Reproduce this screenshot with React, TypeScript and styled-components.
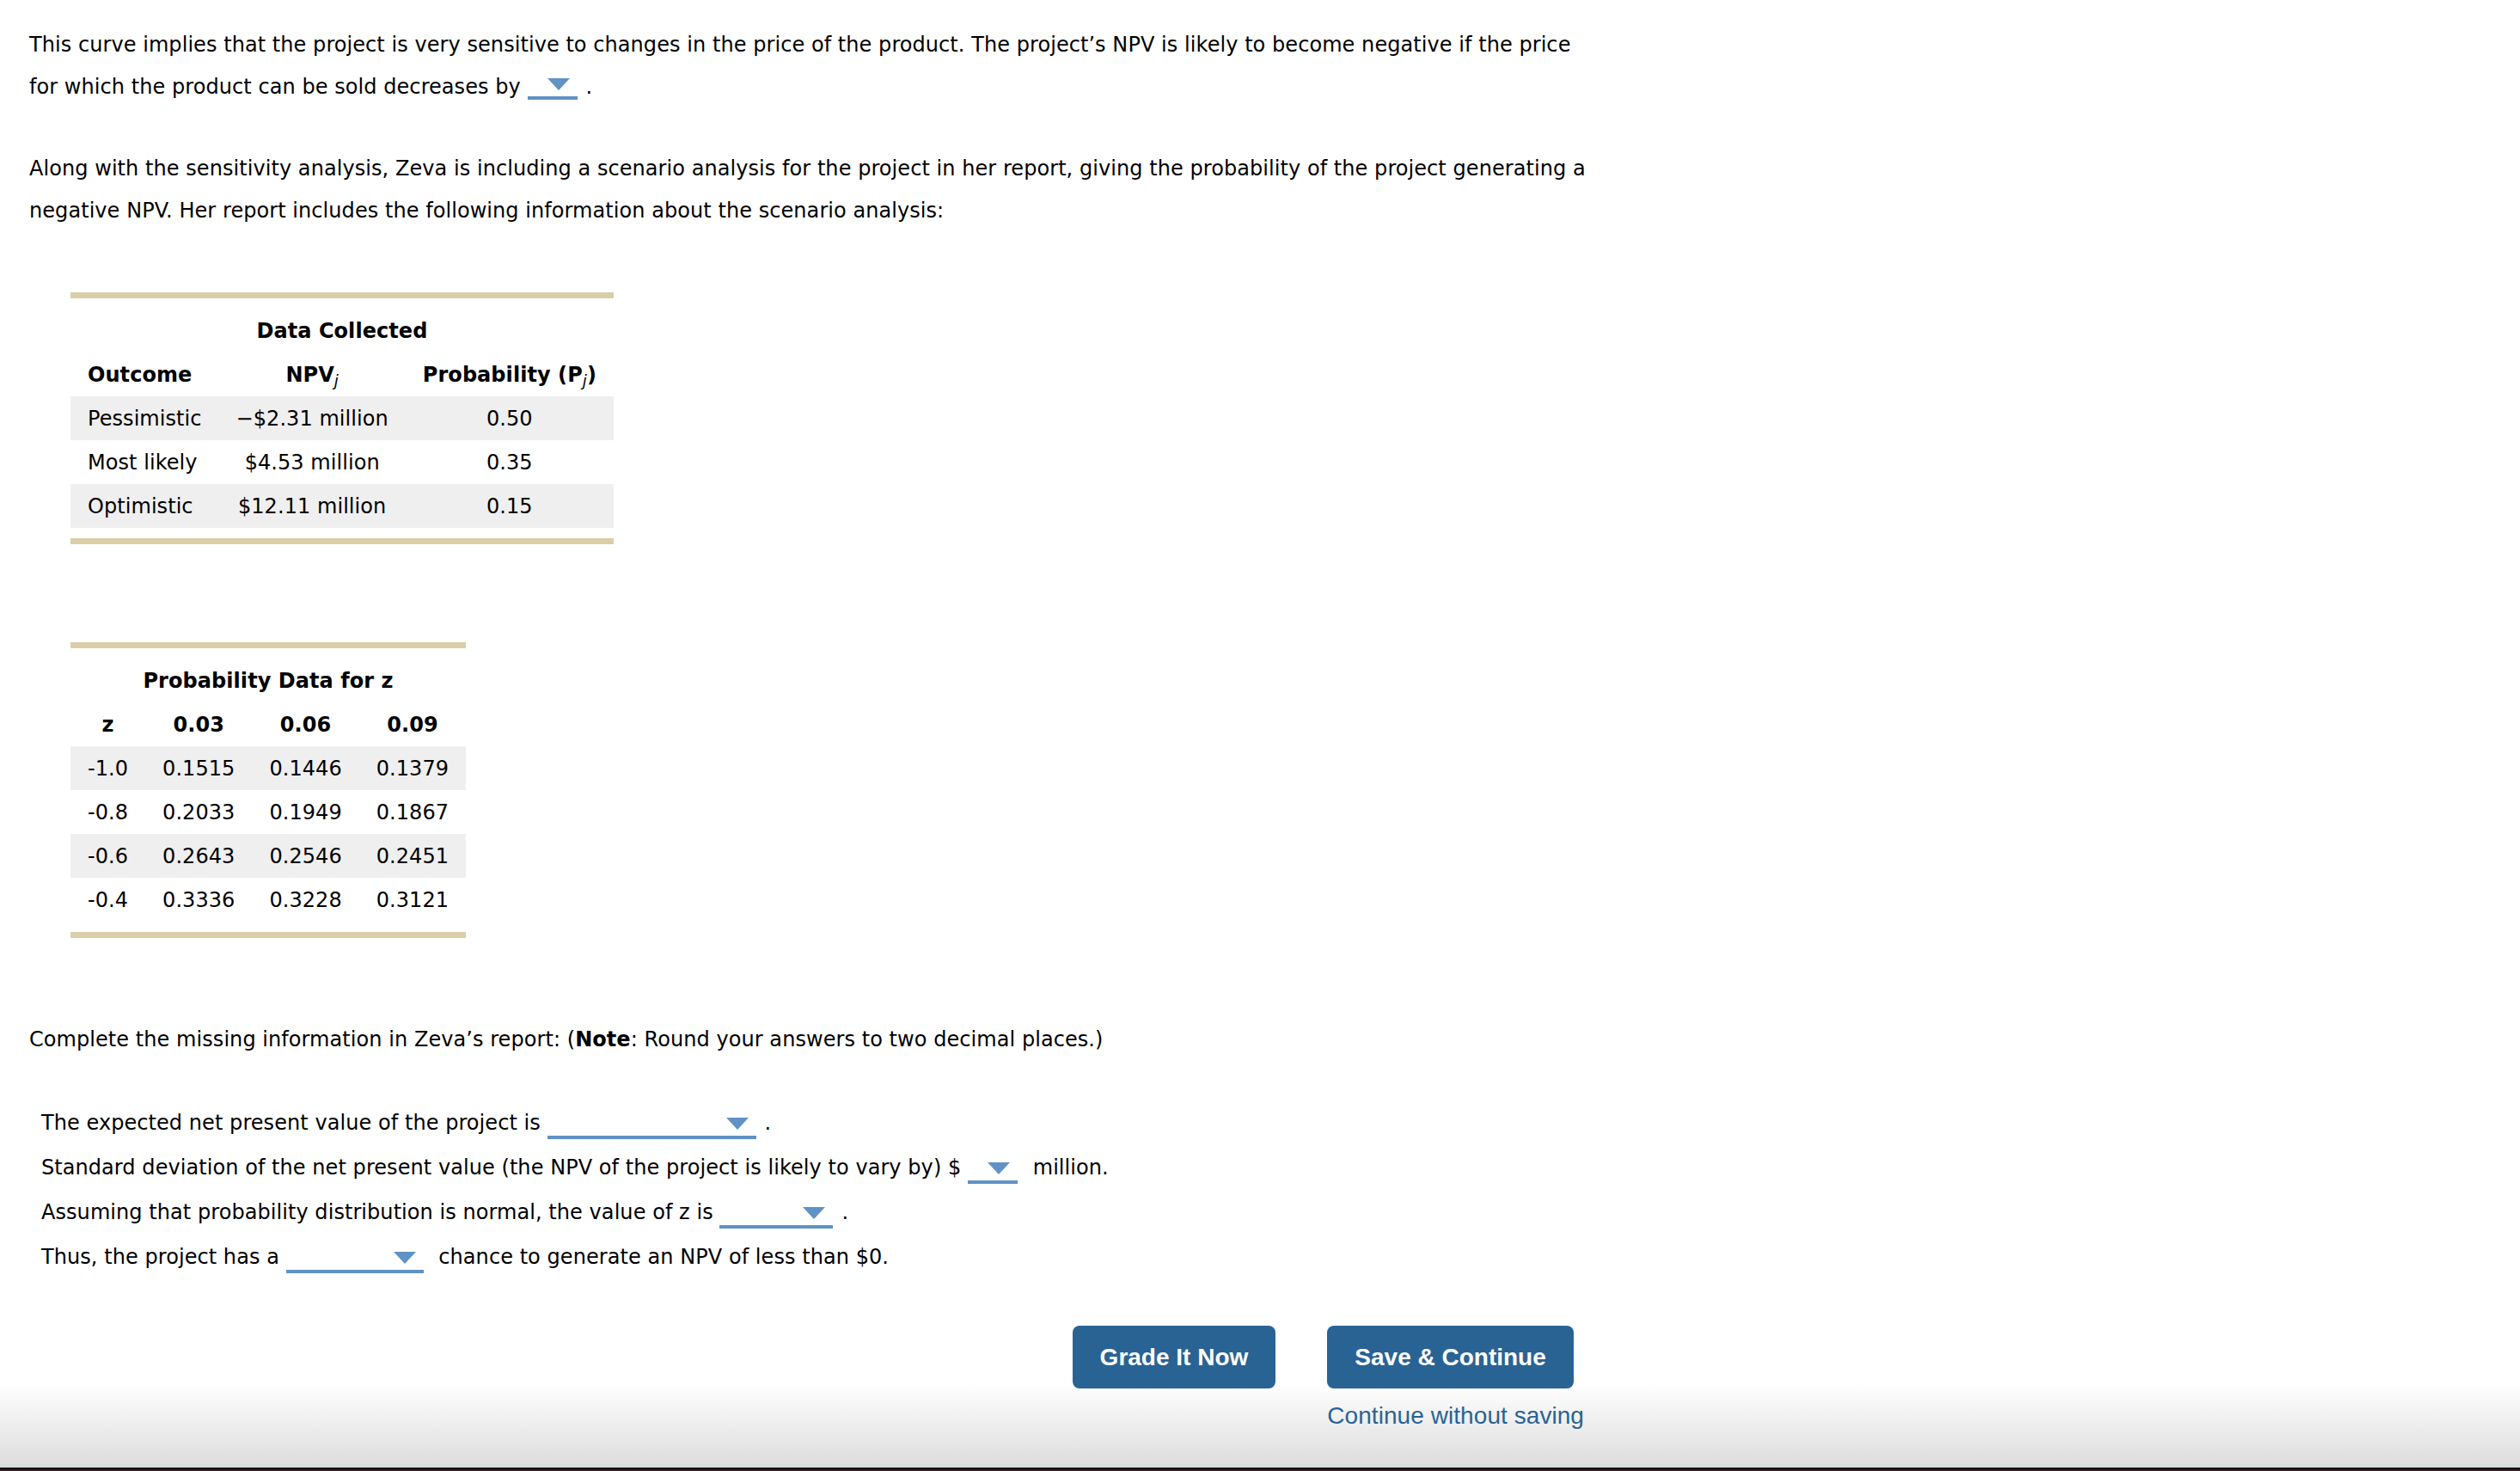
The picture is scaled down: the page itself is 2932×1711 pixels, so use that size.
import styled, { createGlobalStyle } from "styled-components";

const GlobalStyle = createGlobalStyle`
  html, body {
    margin: 0;
    padding: 0;
    background: #ffffff;
  }
  body {
    font-family: "DejaVu Sans", Verdana, sans-serif;
    font-size: 24px;
    letter-spacing: 0.06px;
    color: #000000;
  }
`;

const Main = styled.main`
  width: 1820px;
  padding: 28px 0 0 34px;
`;

const Paragraph = styled.p<{ $top?: number }>`
  margin: ${(p) => p.$top ?? 0}px 0 0;
  line-height: 49px;
`;

const Dropdown = styled.span<{ $w: number; $drop?: number }>`
  display: inline-block;
  position: relative;
  width: ${(p) => p.$w}px;
  height: 24px;
  border-bottom: 4px solid #6092c5;
  vertical-align: ${(p) => -(p.$drop ?? 7)}px;
  margin-right: 10px;

  &::after {
    content: "";
    position: absolute;
    right: 9px;
    top: 3px;
    border-left: 13px solid transparent;
    border-right: 13px solid transparent;
    border-top: 14px solid #6092c5;
  }
`;

const TableFrame = styled.div<{ $top: number }>`
  width: fit-content;
  margin: ${(p) => p.$top}px 0 0 48px;
  padding: 12px 0;
  border-top: 7px solid #d9cea8;
  border-bottom: 7px solid #d9cea8;
`;

const Table = styled.table`
  border-collapse: collapse;
  font-size: 24px;
`;

const Row = styled.tr<{ $shaded?: boolean }>`
  background: ${(p) => (p.$shaded ? "#efefef" : "transparent")};
`;

const HeadCell = styled.th<{ $align?: string }>`
  height: 51px;
  padding: 0 20px;
  font-weight: bold;
  white-space: nowrap;
  text-align: ${(p) => p.$align ?? "center"};
`;

const Cell = styled.td<{ $align?: string }>`
  height: 51px;
  padding: 0 20px;
  white-space: nowrap;
  text-align: ${(p) => p.$align ?? "center"};
`;

const Sub = styled.sub`
  font-style: italic;
  font-weight: normal;
  font-size: 0.75em;
  vertical-align: -0.25em;
  line-height: 0;
`;

const Answers = styled.div`
  margin-top: 46px;
  padding-left: 14px;
  display: flex;
  flex-direction: column;
`;

const AnswerLine = styled.div`
  line-height: 52px;
  white-space: nowrap;
`;

const Footer = styled.footer`
  padding: 54px 0 44px;
  background: linear-gradient(to bottom, #ffffff 0%, #ffffff 55%, #dcdcdc 100%);
`;

const FooterInner = styled.div`
  width: 1809px;
  padding-left: 34px;
  display: flex;
  justify-content: flex-end;
  align-items: flex-start;
  gap: 60px;
`;

const SaveColumn = styled.div`
  display: flex;
  flex-direction: column;
  align-items: flex-start;
`;

const Button = styled.button`
  height: 73px;
  padding: 0 32px;
  border: none;
  border-radius: 8px;
  background: #296394;
  color: #ffffff;
  font-family: "Liberation Sans", Arial, sans-serif;
  font-weight: bold;
  font-size: 28px;
  cursor: pointer;
`;

const Link = styled.a`
  margin-top: 16px;
  font-family: "Liberation Sans", Arial, sans-serif;
  font-size: 28px;
  line-height: 32px;
  color: #296394;
  text-decoration: none;
  cursor: pointer;
`;

const BottomBar = styled.div`
  height: 20px;
  border-top: 2px solid #000000;
  background: #3a1c22;
`;

const scenarios = [
  { outcome: "Pessimistic", npv: "\u2212$2.31 million", prob: "0.50" },
  { outcome: "Most likely", npv: "$4.53 million", prob: "0.35" },
  { outcome: "Optimistic", npv: "$12.11 million", prob: "0.15" },
];

const zRows = [
  { z: "-1.0", v: ["0.1515", "0.1446", "0.1379"] },
  { z: "-0.8", v: ["0.2033", "0.1949", "0.1867"] },
  { z: "-0.6", v: ["0.2643", "0.2546", "0.2451"] },
  { z: "-0.4", v: ["0.3336", "0.3228", "0.3121"] },
];

export default function App() {
  return (
    <>
      <GlobalStyle />
      <Main>
        <Paragraph>
          This curve implies that the project is very sensitive to changes in the price of the
          product. The project’s NPV is likely to become negative if the price for which the
          product can be sold decreases by <Dropdown $w={58} />.
        </Paragraph>

        <Paragraph $top={46}>
          Along with the sensitivity analysis, Zeva is including a scenario analysis for the
          project in her report, giving the probability of the project generating a negative NPV.
          Her report includes the following information about the scenario analysis:
        </Paragraph>

        <TableFrame $top={70}>
          <Table>
            <tbody>
              <tr>
                <HeadCell colSpan={3}>Data Collected</HeadCell>
              </tr>
              <tr>
                <HeadCell $align="left">Outcome</HeadCell>
                <HeadCell>
                  NPV<Sub>j</Sub>
                </HeadCell>
                <HeadCell>
                  Probability (P<Sub>j</Sub>)
                </HeadCell>
              </tr>
              {scenarios.map((s, i) => (
                <Row key={s.outcome} $shaded={i % 2 === 0}>
                  <Cell $align="left">{s.outcome}</Cell>
                  <Cell>{s.npv}</Cell>
                  <Cell>{s.prob}</Cell>
                </Row>
              ))}
            </tbody>
          </Table>
        </TableFrame>

        <TableFrame $top={114}>
          <Table>
            <tbody>
              <tr>
                <HeadCell colSpan={4}>Probability Data for z</HeadCell>
              </tr>
              <tr>
                <HeadCell>z</HeadCell>
                <HeadCell>0.03</HeadCell>
                <HeadCell>0.06</HeadCell>
                <HeadCell>0.09</HeadCell>
              </tr>
              {zRows.map((r, i) => (
                <Row key={r.z} $shaded={i % 2 === 0}>
                  <Cell>{r.z}</Cell>
                  {r.v.map((v) => (
                    <Cell key={v}>{v}</Cell>
                  ))}
                </Row>
              ))}
            </tbody>
          </Table>
        </TableFrame>

        <Paragraph $top={94}>
          Complete the missing information in Zeva’s report: (<b>Note</b>: Round your answers to
          two decimal places.)
        </Paragraph>

        <Answers>
          <AnswerLine>
            The expected net present value of the project is <Dropdown $w={243} $drop={11} />.
          </AnswerLine>
          <AnswerLine>
            Standard deviation of the net present value (the NPV of the project is likely to vary
            by) $ <Dropdown $w={58} $drop={11} /> million.
          </AnswerLine>
          <AnswerLine>
            Assuming that probability distribution is normal, the value of z is{" "}
            <Dropdown $w={132} $drop={11} />.
          </AnswerLine>
          <AnswerLine>
            Thus, the project has a <Dropdown $w={160} $drop={11} /> chance to generate an NPV of
            less than $0.
          </AnswerLine>
        </Answers>
      </Main>

      <Footer>
        <FooterInner>
          <Button>Grade It Now</Button>
          <SaveColumn>
            <Button>Save &amp; Continue</Button>
            <Link>Continue without saving</Link>
          </SaveColumn>
        </FooterInner>
      </Footer>
      <BottomBar />
    </>
  );
}
